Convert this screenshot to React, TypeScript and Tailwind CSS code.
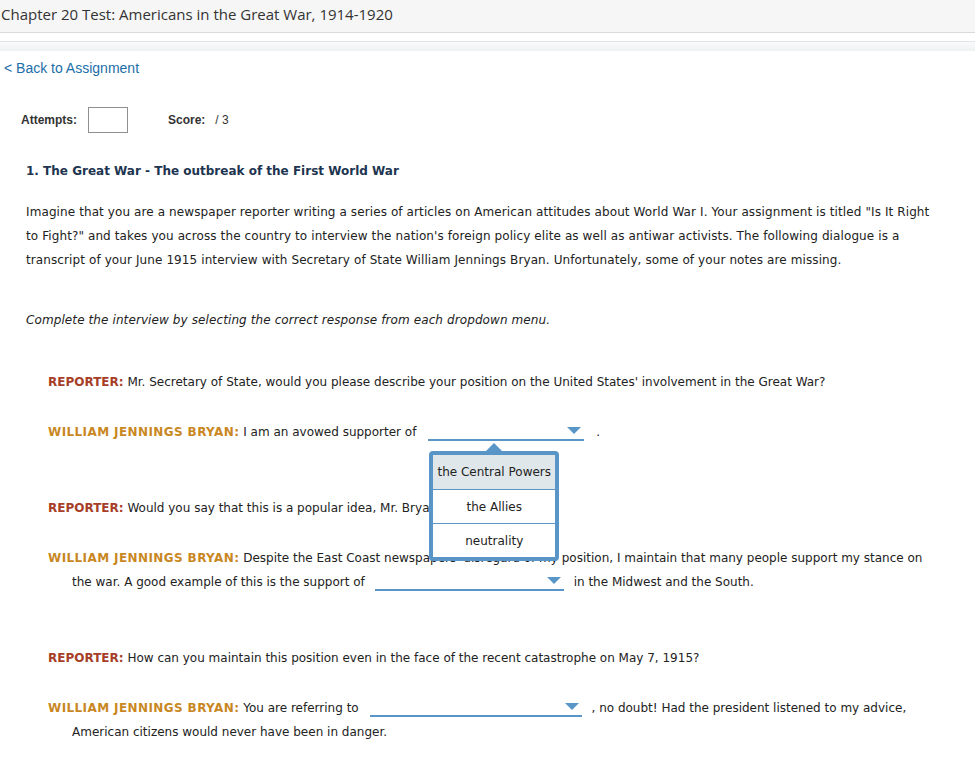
import React from 'react'

const body = "font-['DejaVu_Sans',Verdana,sans-serif]"

function Dropdown({ width, children }: { width: string; children?: React.ReactNode }) {
  return (
    <span className={`relative inline-block indent-0 align-[-5px] h-[17px] border-b-2 border-[#5a95c8] ${width}`}>
      <span className="absolute right-[3px] top-[3px] w-0 h-0 border-l-[7px] border-r-[7px] border-t-[7px] border-l-transparent border-r-transparent border-t-[#5a95c8]" />
      {children}
    </span>
  )
}

function Menu() {
  const options = ['the Central Powers', 'the Allies', 'neutrality']
  return (
    <div className="absolute left-[1px] top-[19px] z-10 w-[130px] indent-0 tracking-normal">
      <div className="mx-auto w-0 h-0 border-l-[8px] border-r-[8px] border-b-[8px] border-l-transparent border-r-transparent border-b-[#5a95c8]" />
      <div className="rounded-[4px] border-4 border-[#5a95c8] bg-white">
        {options.map((o, i) => (
          <div
            key={o}
            className={`h-[34px] flex items-center justify-center text-[12px] leading-none text-[#222] ${
              i === 0 ? 'bg-[#dfe7ea]' : 'border-t border-[#5a95c8]'
            }`}
          >
            {o}
          </div>
        ))}
      </div>
    </div>
  )
}

function Reporter({ children, className = '' }: { children: React.ReactNode; className?: string }) {
  return (
    <p className={`pl-[46px] indent-[-24px] leading-[24px] ${className}`}>
      <span className="font-bold text-[#a63e28]">REPORTER:</span> {children}
    </p>
  )
}

function Bryan({ children }: { children: React.ReactNode }) {
  return (
    <p className="pl-[46px] indent-[-24px] leading-[24px]">
      <span className="font-bold tracking-[0.4px] text-[#c9871f]">WILLIAM JENNINGS BRYAN:</span> {children}
    </p>
  )
}

export default function App() {
  return (
    <div className="w-[975px] h-[759px] overflow-hidden bg-white">
      <header className="h-[33px] bg-[#f6f6f6] border-b border-[#dadada]">
        <h1 className="font-['Open_Sans',sans-serif] text-[15px] leading-[28px] text-[#333] pl-[1px]">
          Chapter 20 Test: Americans in the Great War, 1914-1920
        </h1>
      </header>
      <div className="h-[8px]" />
      <div className="h-[10px] border-t border-[#e2e5e5] bg-gradient-to-b from-[#f9fbfb] to-[#eef2f3]" />

      <a className="block mt-[9px] pl-[4px] font-['Liberation_Sans',Arial,sans-serif] text-[14px] leading-[16px] text-[#1c6ea8]">
        &lt; Back to Assignment
      </a>

      <div className="mt-[31px] flex items-center h-[26px] font-['Liberation_Sans',Arial,sans-serif] text-[12px] text-[#333]">
        <span className="ml-[21px] font-bold">Attempts:</span>
        <span className="ml-[11px] w-[40px] h-[26px] border border-[#8f8f8f] bg-white" />
        <span className="ml-[40px] font-bold">Score:</span>
        <span className="ml-[10px]">/ 3</span>
      </div>

      <div className={`${body} text-[12px] text-[#222] pl-[26px] pr-[40px]`}>
        <h2 className="mt-[26px] font-bold text-[#1d3550] leading-[24px]">
          1. The Great War - The outbreak of the First World War
        </h2>
        <p className="mt-[17px] leading-[24px] tracking-[0.1px]">
          Imagine that you are a newspaper reporter writing a series of articles on American attitudes about World War I. Your assignment is titled "Is It Right to Fight?" and takes you across the country to interview the nation's foreign policy elite as well as antiwar activists. The following dialogue is a transcript of your June 1915 interview with Secretary of State William Jennings Bryan. Unfortunately, some of your notes are missing.
        </p>
        <p className="mt-[36px] italic leading-[24px] tracking-[0.1px]">
          Complete the interview by selecting the correct response from each dropdown menu.
        </p>

        <div className="mt-[38px] flex flex-col gap-[26px]">
          <Reporter>
            Mr. Secretary of State, would you please describe your position on the United States' involvement in the Great War?
          </Reporter>
          <Bryan>
            I am an avowed supporter of{' '}
            <Dropdown width="w-[156px] ml-[8px]">
              <Menu />
            </Dropdown>
            <span className="ml-[12px]">.</span>
          </Bryan>
          <Reporter className="mt-[26px]">Would you say that this is a popular idea, Mr. Bryan?</Reporter>
          <Bryan>
            Despite the East Coast newspapers' disregard of my position, I maintain that many people support my stance on the war. A good example of this is the support of{' '}
            <Dropdown width="w-[189px] ml-[6px]" />
            <span className="ml-[10px]">in the Midwest and the South.</span>
          </Bryan>
          <Reporter className="mt-[26px]">How can you maintain this position even in the face of the recent catastrophe on May 7, 1915?</Reporter>
          <Bryan>
            You are referring to{' '}
            <Dropdown width="w-[212px] ml-[7px]" />
            <span className="ml-[10px]">, no doubt! Had the president listened to my advice, American citizens would never have been in danger.</span>
          </Bryan>
        </div>
      </div>
    </div>
  )
}
